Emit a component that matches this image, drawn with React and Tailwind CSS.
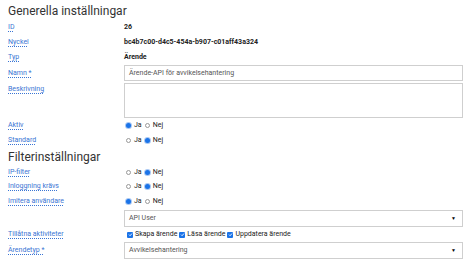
import React from "react";

const Label = ({ children }) => (
  <span className="text-[#3a75d4] underline decoration-dotted decoration-[#3a75d4] underline-offset-[2px]">{children}</span>
);

const Radio = ({ on }) =>
  on ? (
    <span className="inline-block w-[5px] h-[5px] rounded-full bg-[#1a73e8] ring-1 ring-[#a9c8f3]" />
  ) : (
    <span className="inline-block w-[5px] h-[5px] rounded-full border border-[#999]" />
  );

const YesNo = ({ yes }) => (
  <div className="flex items-center gap-[3px] text-[#222]">
    <Radio on={yes} />
    <span>Ja</span>
    <Radio on={!yes} />
    <span>Nej</span>
  </div>
);

const Check = () => (
  <span className="inline-flex items-center justify-center w-[6px] h-[6px] bg-[#1a73e8] rounded-[1px]">
    <svg viewBox="0 0 10 10" className="w-[5px] h-[5px]">
      <path d="M2 5.2 L4.2 7.4 L8 3" fill="none" stroke="white" strokeWidth="1.8" />
    </svg>
  </span>
);

const Select = ({ value }) => (
  <div className="h-[17px] border border-[#cfcfcf] bg-white flex items-center justify-between px-[4px] text-[#555]">
    <span>{value}</span>
    <span className="text-[5px] text-black mr-[2px]">▼</span>
  </div>
);

export default function App() {
  return (
    <div className="w-[474px] h-[275px] bg-white pl-[8px] pr-[11px] text-[7px] text-[#222]" style={{ fontFamily: "Roboto, sans-serif" }}>
      <h2 className="h-[20px] flex items-center text-[12px] text-[#333] pt-[1px]">Generella inställningar</h2>
      <div className="grid grid-cols-[116px_1fr]">
        <div className="h-[15px] flex items-center"><Label>ID</Label></div>
        <div className="h-[15px] flex items-center font-bold">26</div>
        <div className="h-[15px] flex items-center"><Label>Nyckel</Label></div>
        <div className="h-[15px] flex items-center font-bold">bc4b7c00-d4c5-454a-b907-c01aff43a324</div>
        <div className="h-[15px] flex items-center"><Label>Typ</Label></div>
        <div className="h-[15px] flex items-center font-bold">Ärende</div>

        <div className="h-[16px] flex items-center"><Label>Namn *</Label></div>
        <div className="h-[16px] border border-[#cfcfcf] flex items-center px-[4px] text-[#555]">Ärende-API för avvikelsehantering</div>
        <div className="mt-[3px]"><Label>Beskrivning</Label></div>
        <div className="mt-[2px] h-[35px] border border-[#cfcfcf]" />

        <div className="h-[15px] flex items-center"><Label>Aktiv</Label></div>
        <div className="h-[15px] flex items-center pl-[2px]"><YesNo yes /></div>
        <div className="h-[15px] flex items-center"><Label>Standard</Label></div>
        <div className="h-[15px] flex items-center pl-[2px]"><YesNo /></div>
      </div>
      <h2 className="h-[17px] flex items-center text-[12px] text-[#333]">Filterinställningar</h2>
      <div className="grid grid-cols-[116px_1fr]">
        <div className="h-[14px] flex items-center"><Label>IP-filter</Label></div>
        <div className="h-[14px] flex items-center pl-[2px]"><YesNo /></div>
        <div className="h-[15px] flex items-center"><Label>Inloggning krävs</Label></div>
        <div className="h-[15px] flex items-center pl-[2px]"><YesNo /></div>
        <div className="h-[14px] flex items-center"><Label>Imitera användare</Label></div>
        <div className="h-[14px] flex items-center pl-[2px]"><YesNo yes /></div>

        <div className="mt-[2px]" />
        <div className="mt-[2px]"><Select value="API User" /></div>

        <div className="h-[15px] flex items-center"><Label>Tillåtna aktiviteter</Label></div>
        <div className="h-[15px] flex items-center gap-[2px] pl-[3px]">
          <Check /><span>Skapa ärende</span>
          <Check /><span>Läsa ärende</span>
          <Check /><span>Uppdatera ärende</span>
        </div>
        <div className="h-[17px] flex items-center"><Label>Ärendetyp *</Label></div>
        <div><Select value="Avvikelsehantering" /></div>
      </div>
    </div>
  );
}
